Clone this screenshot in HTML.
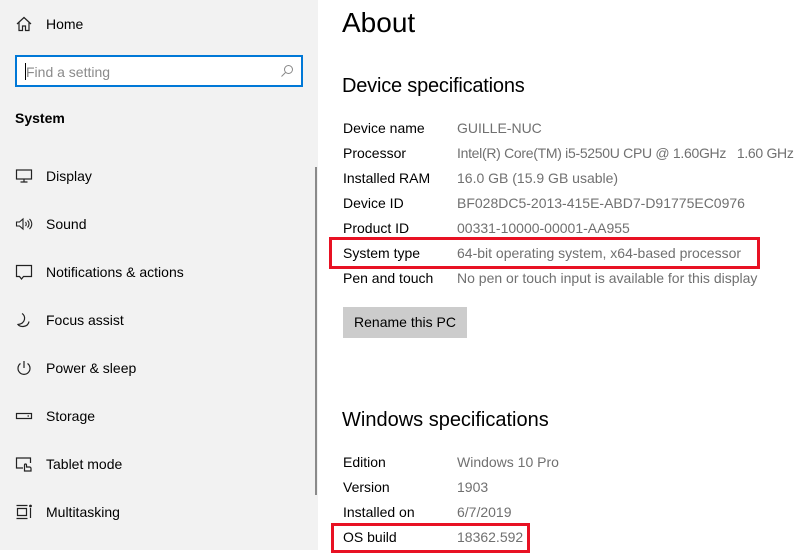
<!DOCTYPE html>
<html><head><meta charset="utf-8"><style>
*{margin:0;padding:0;box-sizing:border-box}
body{width:797px;height:550px;overflow:hidden;font-family:"Liberation Sans",sans-serif;background:#fff;position:relative;color:#000}
.side{position:absolute;left:0;top:0;width:318px;height:550px;background:#f2f2f2}
.t{position:absolute;white-space:nowrap;font-size:14px;line-height:18px}
.ic{position:absolute;left:15px;width:18px;height:18px}
.sb{position:absolute;left:315px;top:167px;width:2px;height:328px;background:#8a8a8a}
.search{position:absolute;left:15px;top:55px;width:288px;height:32px;border:2px solid #0078d7;background:#fff}
.lbl{position:absolute;left:343px;font-size:14px;line-height:18px;white-space:nowrap}
.val{position:absolute;left:457px;font-size:14px;line-height:18px;white-space:nowrap;color:#707070}
.red{position:absolute;border:3px solid #e81123}
</style></head><body>
<div class="side">
<svg class="ic" style="top:15px" viewBox="0 0 18 18" fill="none" stroke="#222" stroke-width="1.2"><path d="M2 9 L9 2.5 L16 9 M4 7.5 V15.5 H7.5 V11 H10.5 V15.5 H14 V7.5"/></svg>
<div class="t" style="left:46px;top:15px">Home</div>
<div class="search"><div style="position:absolute;left:8px;top:6px;width:1px;height:17px;background:#000"></div><div class="t" style="left:9px;top:6px;color:#8a8a8a">Find a setting</div>
<svg style="position:absolute;right:7px;top:7px" width="14" height="14" viewBox="0 0 14 14" fill="none" stroke="#888" stroke-width="1"><circle cx="8.5" cy="5.5" r="4"/><path d="M5.5 8.5 L1.5 12.5"/></svg></div>
<div class="t" style="left:15px;top:109px;font-weight:bold">System</div>
<svg class="ic" style="top:167px" viewBox="0 0 18 18" fill="none" stroke="#222" stroke-width="1.2"><rect x="1.5" y="3" width="15" height="9"/><path d="M9 12v3M5.5 15h7"/></svg>
<div class="t" style="left:46px;top:167px">Display</div>
<svg class="ic" style="top:215px" viewBox="0 0 18 18" fill="none" stroke="#222" stroke-width="1.1"><path d="M1.5 7h3l3.5-3v10l-3.5-3h-3z M10.5 7c1 1 1 3 0 4 M12.5 5.5c2 2 2 5 0 7 M14.5 4c3 3 3 7 0 10"/></svg>
<div class="t" style="left:46px;top:215px">Sound</div>
<svg class="ic" style="top:263px" viewBox="0 0 18 18" fill="none" stroke="#222" stroke-width="1.2"><path d="M1.5 2.5h15v11h-8l-2 2.5-2-2.5h-3z"/></svg>
<div class="t" style="left:46px;top:263px">Notifications &amp; actions</div>
<svg class="ic" style="top:311px" viewBox="0 0 18 18" fill="none" stroke="#222" stroke-width="1.2"><path d="M7 2.5c4 2 4 10 -4 11 c2 3 10 3 11-3"/></svg>
<div class="t" style="left:46px;top:311px">Focus assist</div>
<svg class="ic" style="top:359px" viewBox="0 0 18 18" fill="none" stroke="#222" stroke-width="1.2"><path d="M9 2v7 M5.5 4.5a6 6 0 1 0 7 0"/></svg>
<div class="t" style="left:46px;top:359px">Power &amp; sleep</div>
<svg class="ic" style="top:407px" viewBox="0 0 18 18" fill="none" stroke="#222" stroke-width="1.2"><rect x="1.5" y="6.5" width="15" height="5"/><path d="M12.5 9h1.5"/></svg>
<div class="t" style="left:46px;top:407px">Storage</div>
<svg class="ic" style="top:455px" viewBox="0 0 18 18" fill="none" stroke="#222" stroke-width="1.2"><path d="M8 13H1.5V3h14v5 M9.5 16v-6a1 1 0 0 1 2 0v2h3a1.5 1.5 0 0 1 1.5 1.5V16z"/></svg>
<div class="t" style="left:46px;top:455px">Tablet mode</div>
<svg class="ic" style="top:503px" viewBox="0 0 18 18" fill="none" stroke="#222" stroke-width="1.2"><path d="M1.5 2.5h11 M1.5 15.5h11 M2.5 5.5h9v7h-9z M15.5 5v10"/><circle cx="15.5" cy="3" r="0.8" fill="#222"/></svg>
<div class="t" style="left:46px;top:503px">Multitasking</div>
<div class="sb"></div>
</div>
<div class="t" style="left:342px;top:6px;font-size:28px;line-height:34px">About</div>
<div class="t" style="left:342px;top:74px;font-size:20px;line-height:24px;letter-spacing:-0.2px">Device specifications</div>
<div class="lbl" style="top:119px">Device name</div><div class="val" style="top:119px">GUILLE-NUC</div>
<div class="lbl" style="top:144px">Processor</div><div class="val" style="top:144px;letter-spacing:-0.3px">Intel(R) Core(TM) i5-5250U CPU @ 1.60GHz &nbsp; 1.60 GHz</div>
<div class="lbl" style="top:169px">Installed RAM</div><div class="val" style="top:169px">16.0 GB (15.9 GB usable)</div>
<div class="lbl" style="top:194px">Device ID</div><div class="val" style="top:194px">BF028DC5-2013-415E-ABD7-D91775EC0976</div>
<div class="lbl" style="top:219px">Product ID</div><div class="val" style="top:219px">00331-10000-00001-AA955</div>
<div class="lbl" style="top:244px">System type</div><div class="val" style="top:244px">64-bit operating system, x64-based processor</div>
<div class="lbl" style="top:269px">Pen and touch</div><div class="val" style="top:269px">No pen or touch input is available for this display</div>
<div class="red" style="left:329px;top:237px;width:431px;height:32px"></div>
<div style="position:absolute;left:343px;top:307px;width:124px;height:31px;background:#ccc;font-size:14px;line-height:31px;text-align:center">Rename this PC</div>
<div class="t" style="left:342px;top:408px;font-size:20px;line-height:24px">Windows specifications</div>
<div class="lbl" style="top:453px">Edition</div><div class="val" style="top:453px">Windows 10 Pro</div>
<div class="lbl" style="top:478px">Version</div><div class="val" style="top:478px">1903</div>
<div class="lbl" style="top:503px">Installed on</div><div class="val" style="top:503px">6/7/2019</div>
<div class="lbl" style="top:528px">OS build</div><div class="val" style="top:528px">18362.592</div>
<div class="red" style="left:331px;top:523px;width:199px;height:30px"></div>
</body></html>
